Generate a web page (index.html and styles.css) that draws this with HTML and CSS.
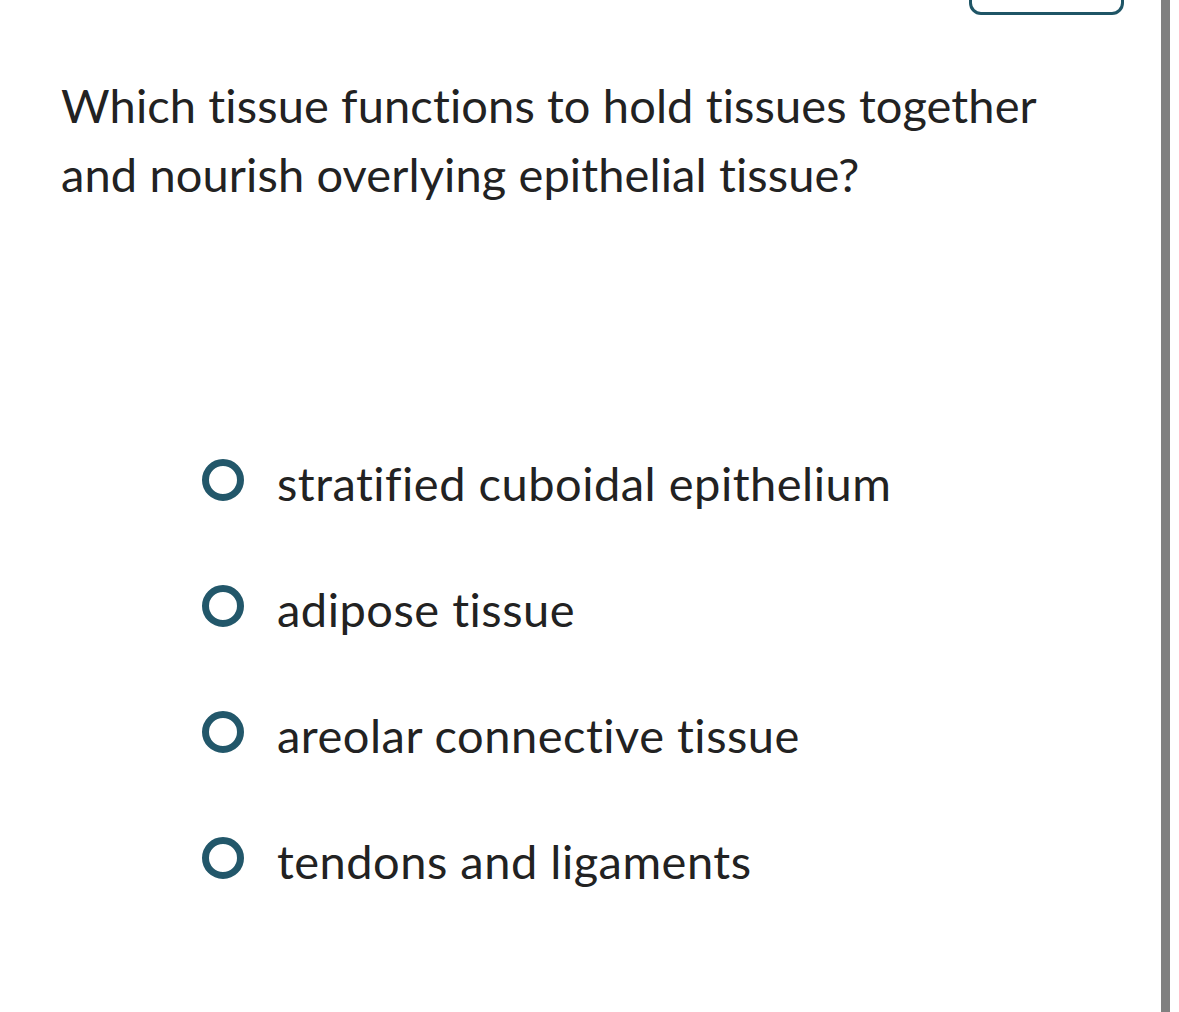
FILE: index.html
```html
<!DOCTYPE html>
<html>
<head>
<meta charset="utf-8">
<link rel="stylesheet" href="styles.css">
</head>
<body>
<div class="page">
  <div class="content">
    <div class="topbar"><div class="topbtn"></div></div>
    <p class="question">Which tissue functions to hold tissues together and nourish overlying epithelial tissue?</p>
    <ul class="options">
      <li class="option"><span class="radio"></span><span class="label">stratified cuboidal epithelium</span></li>
      <li class="option"><span class="radio"></span><span class="label">adipose tissue</span></li>
      <li class="option"><span class="radio"></span><span class="label">areolar connective tissue</span></li>
      <li class="option"><span class="radio"></span><span class="label">tendons and ligaments</span></li>
    </ul>
  </div>
  <div class="scrollbar"></div>
</div>
</body>
</html>
```
FILE: styles.css
```css
html, body {
  margin: 0;
  padding: 0;
  background: #ffffff;
}
.page {
  display: flex;
  width: 1179px;
  height: 1012px;
  overflow: hidden;
}
.content {
  flex: 1;
  font-family: Lato, "Open Sans", sans-serif;
  font-variant-ligatures: none;
  color: #222222;
}
.topbar {
  display: flex;
  justify-content: flex-end;
  padding-right: 37px;
  height: 15px;
}
.topbtn {
  width: 149px;
  height: 40px;
  margin-top: -31px;
  border: 3px solid #1f5566;
  border-radius: 12px;
}
.question {
  margin: 56px 0 0 61px;
  font-size: 47px;
  line-height: 69px;
  letter-spacing: 0.12px;
  width: 1040px;
}
.options {
  list-style: none;
  margin: 250px 0 0 0;
  padding: 0 0 0 202px;
  display: flex;
  flex-direction: column;
  gap: 78px;
}
.option {
  display: flex;
  align-items: flex-start;
  height: 48px;
}
.radio {
  width: 28px;
  height: 28px;
  border: 7px solid #22576a;
  border-radius: 50%;
  flex: none;
}
.label {
  margin-left: 33px;
  font-size: 47px;
  line-height: 48px;
  letter-spacing: 0.5px;
}
.scrollbar {
  width: 9px;
  background: #808080;
  margin-right: 9px;
  flex: none;
}
```
